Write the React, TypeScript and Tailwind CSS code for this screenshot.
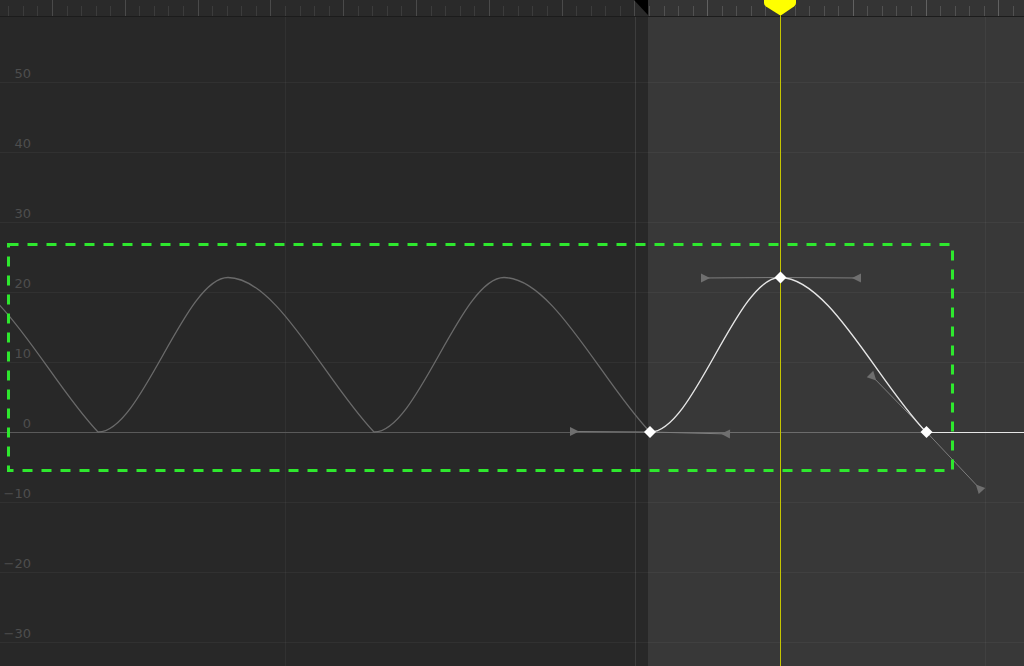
import React from "react";

// curve editor: one looping key sequence, playhead at frame 780px
const SPLIT = 648;
const PERIOD = 276;
const GRID_Y = [82, 152, 222, 292, 362, 432, 502, 572, 642];
const LABELS = ["50", "40", "30", "20", "10", "0", "−10", "−20", "−30"];
const GRID_X = [285, 635, 985];

const seg1 = (dx: number) =>
  `M${650 + dx},432 C${693.3 + dx},432.8 ${736.7 + dx},277.5 ${780 + dx},277.5`;
const seg2 = (dx: number) =>
  `M${780 + dx},277.5 C${828.7 + dx},277.5 ${877.3 + dx},381.4 ${926 + dx},432`;

const KEYS = [
  { x: 650, y: 432, ends: [[570, 431.5], [730, 434]] },
  { x: 780.5, y: 277.5, ends: [[701, 278], [861, 278]] },
  { x: 926.5, y: 432, ends: [[870, 374], [982, 491]] },
];

function handleTip(ex: number, ey: number, kx: number, ky: number) {
  const dx = kx - ex;
  const dy = ky - ey;
  const len = Math.hypot(dx, dy);
  const ux = dx / len;
  const uy = dy / len;
  const px = -uy;
  const py = ux;
  const w = 4.5;
  const l = 9;
  return `${ex + px * w},${ey + py * w} ${ex - px * w},${ey - py * w} ${ex + ux * l},${ey + uy * l}`;
}

function Ruler() {
  const ticks: { x: number; major: boolean }[] = [];
  for (let i = -4; i < 72; i++) {
    const x = 52 + i * 14.56;
    if (x < 0 || x > 1024) continue;
    ticks.push({ x: Math.round(x) + 0.5, major: i % 5 === 0 });
  }
  return (
    <div className="relative flex h-[17px] border-b border-[#1c1c1c]">
      <div className="w-[648px] bg-[#2a2a2a]" />
      <div className="flex-1 bg-[#343434]" />
      <svg className="absolute inset-0" width={1024} height={16}>
        {ticks.map((t) => (
          <line
            key={t.x}
            x1={t.x}
            x2={t.x}
            y1={t.major ? 0 : 6}
            y2={16}
            stroke={
              t.x > SPLIT
                ? t.major
                  ? "#616161"
                  : "#515151"
                : t.major
                  ? "#4a4a4a"
                  : "#3c3c3c"
            }
            strokeWidth={1}
          />
        ))}
        <polygon points="634,0 648,0 648,15" fill="#000" />
      </svg>
    </div>
  );
}

export default function App() {
  const copies = [1, 2, 3];
  return (
    <div className="relative flex h-screen w-full flex-col overflow-hidden bg-[#282828] font-['DejaVu_Sans',sans-serif]">
      <Ruler />
      <div className="flex flex-1">
        <div className="w-[648px] bg-[#282828]" />
        <div className="flex-1 bg-[#383838]" />
      </div>

      <svg className="absolute inset-0" width={1024} height={666}>
        {/* grid */}
        {GRID_Y.map((y) =>
          y === 432 ? null : (
            <line key={y} x1={0} x2={1024} y1={y + 0.5} y2={y + 0.5} stroke="#ffffff" strokeOpacity={0.045} />
          )
        )}
        {GRID_X.map((x) => (
          <line
            key={x}
            x1={x + 0.5}
            x2={x + 0.5}
            y1={17}
            y2={666}
            stroke="#ffffff"
            strokeOpacity={x === 635 ? 0.1 : 0.045}
          />
        ))}
        <line x1={0} x2={SPLIT} y1={432.5} y2={432.5} stroke="#5a5a5a" />
        <line x1={SPLIT} x2={926} y1={432.5} y2={432.5} stroke="#6c6c6c" />

        {/* value labels */}
        {GRID_Y.map((y, i) => (
          <text
            key={y}
            x={31}
            y={y - 4}
            textAnchor="end"
            fontSize={13}
            fill="#4e4e4e"
            fontFamily="DejaVu Sans, sans-serif"
          >
            {LABELS[i]}
          </text>
        ))}

        {/* looped copies */}
        {copies.map((k) => (
          <g key={k} fill="none" stroke="#6a6a6a" strokeWidth={1.3}>
            <path d={seg1(-PERIOD * k)} />
            <path d={seg2(-PERIOD * k)} />
          </g>
        ))}

        {/* handles */}
        {KEYS.map((k, i) => (
          <g key={i}>
            {k.ends.map(([ex, ey], j) => (
              <g key={j}>
                <line x1={k.x} y1={k.y} x2={ex} y2={ey} stroke="#7e7e7e" strokeWidth={1} />
                <polygon points={handleTip(ex, ey, k.x, k.y)} fill="#6f6f6f" />
              </g>
            ))}
          </g>
        ))}

        {/* active curve */}
        <g fill="none" stroke="#e6e6e6" strokeWidth={1.4}>
          <path d={seg1(0)} />
          <path d={seg2(0)} />
        </g>
        <line x1={926} x2={1024} y1={432.5} y2={432.5} stroke="#e6e6e6" strokeWidth={1.2} />

        {/* playhead */}
        <line x1={780.5} x2={780.5} y1={12} y2={666} stroke="#c4c400" strokeWidth={1} />
        <path d="M764,0 H796 V3 Q796,5 794,6.5 L781.5,15 H779.5 L766,6.5 Q764,5 764,3 Z" fill="#ffff00" />

        {/* keys */}
        {KEYS.map((k, i) => (
          <polygon
            key={i}
            points={`${k.x},${k.y - 6} ${k.x + 6},${k.y} ${k.x},${k.y + 6} ${k.x - 6},${k.y}`}
            fill="#ffffff"
          />
        ))}

        {/* selection box */}
        <rect
          x={8.5}
          y={244.5}
          width={944}
          height={226}
          fill="none"
          stroke="#2ee82e"
          strokeWidth={3}
          strokeDasharray="10 9"
        />
      </svg>
    </div>
  );
}
